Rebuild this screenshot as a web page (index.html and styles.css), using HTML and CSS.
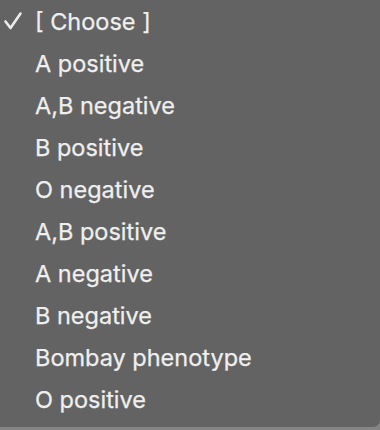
FILE: index.html
```html
<!DOCTYPE html>
<html lang="en">
<head>
  <meta charset="UTF-8" />
  <meta name="viewport" content="width=device-width, initial-scale=1.0"/>
  <title>Blood group</title>
  <link rel="stylesheet" href="styles.css">
</head>
<body>
  <ul class="menu">
    <li class="selected">
      <span class="check">
        <svg width="22" height="22" viewBox="0 0 22 22"><polyline points="2.5,11.5 7.5,18 17.5,3.5" fill="none" stroke="#ececec" stroke-width="2.6" stroke-linecap="round" stroke-linejoin="round"/></svg>
      </span>
      [ Choose ]
    </li>
    <li><span class="check"></span>A positive</li>
    <li><span class="check"></span>A,B negative</li>
    <li><span class="check"></span>B positive</li>
    <li><span class="check"></span>O negative</li>
    <li><span class="check"></span>A,B positive</li>
    <li><span class="check"></span>A negative</li>
    <li><span class="check"></span>B negative</li>
    <li><span class="check"></span>Bombay phenotype</li>
    <li><span class="check"></span>O positive</li>
  </ul>
</body>
</html>
```

FILE: styles.css
```css
body {
  margin: 0;
  background: #858585;
  font-family: Inter, "Liberation Sans", sans-serif;
}

.menu {
  list-style: none;
  margin: 0;
  padding: 0 0 7px;
  width: 380px;
  background: #636363;
  border-bottom-right-radius: 7px;
}

.menu li {
  display: flex;
  align-items: center;
  height: 42px;
  color: #efefef;
  font-size: 23.5px;
  -webkit-text-stroke: 0.25px #efefef;
}

.check {
  width: 35px;
  display: flex;
  padding-left: 3px;
  box-sizing: border-box;
}

.check svg {
  display: block;
}
```
